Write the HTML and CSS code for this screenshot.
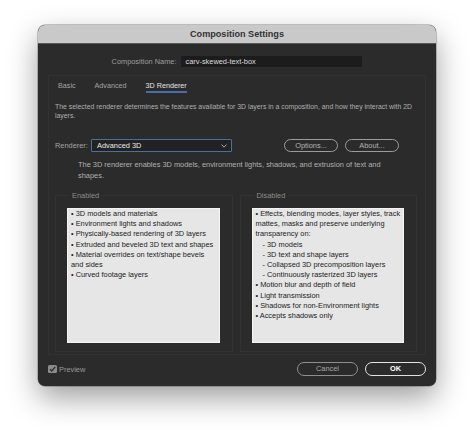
FILE: index.html
```html
<!DOCTYPE html>
<html>
<head>
<meta charset="utf-8">
<link rel="stylesheet" href="styles.css">
</head>
<body>
<div class="stage">
  <div class="window">
    <div class="titlebar">Composition Settings</div>
    <div class="content">
      <div class="name-row">
        <span class="name-label">Composition Name:</span>
        <div class="name-input">carv-skewed-text-box</div>
      </div>
      <div class="panel">
        <div class="tabs">
          <span class="tab">Basic</span>
          <span class="tab">Advanced</span>
          <span class="tab active">3D Renderer</span>
        </div>
        <p class="desc">The selected renderer determines the features available for 3D layers in a composition, and how they interact with 2D<br>layers.</p>
        <div class="renderer-row">
          <span class="renderer-label">Renderer:</span>
          <div class="select">
            <span>Advanced 3D</span>
            <svg class="chev" width="6" height="4" viewBox="0 0 6 4"><path d="M0.6 0.6 L3 3.2 L5.4 0.6" fill="none" stroke="#b8b8b8" stroke-width="0.9"/></svg>
          </div>
          <span class="btn options">Options...</span>
          <span class="btn">About...</span>
        </div>
        <p class="desc2">The 3D renderer enables 3D models, environment lights, shadows, and extrusion of text and<br>shapes.</p>
        <div class="groups">
          <fieldset class="group">
            <legend>Enabled</legend>
            <div class="list">
              <div>• 3D models and materials</div>
              <div>• Environment lights and shadows</div>
              <div>• Physically-based rendering of 3D layers</div>
              <div>• Extruded and beveled 3D text and shapes</div>
              <div>• Material overrides on text/shape bevels<br>and sides</div>
              <div>• Curved footage layers</div>
            </div>
          </fieldset>
          <fieldset class="group">
            <legend>Disabled</legend>
            <div class="list">
              <div>• Effects, blending modes, layer styles, track<br>mattes, masks and preserve underlying<br>transparency on:</div>
              <div class="sub">- 3D models</div>
              <div class="sub">- 3D text and shape layers</div>
              <div class="sub">- Collapsed 3D precomposition layers</div>
              <div class="sub">- Continuously rasterized 3D layers</div>
              <div>• Motion blur and depth of field</div>
              <div>• Light transmission</div>
              <div>• Shadows for non-Environment lights</div>
              <div>• Accepts shadows only</div>
            </div>
          </fieldset>
        </div>
      </div>
      <div class="bottom-row">
        <div class="preview">
          <span class="check">
            <svg width="9" height="8" viewBox="0 0 9 8"><path d="M2 4.2 L3.8 6 L7.2 1.8" fill="none" stroke="#2b2b2b" stroke-width="1.3"/></svg>
          </span>
          <span class="preview-label">Preview</span>
        </div>
        <div class="actions">
          <span class="btn wide">Cancel</span>
          <span class="btn wide ok">OK</span>
        </div>
      </div>
    </div>
  </div>
</div>
</body>
</html>
```
FILE: styles.css
```css
html, body {
  margin: 0;
  padding: 0;
  background: #ffffff;
}
body {
  font-family: "Liberation Sans", Arial, sans-serif;
  width: 474px;
  height: 437px;
  overflow: hidden;
}
.stage {
  padding: 25px 0 0 38px;
}
.window {
  width: 398px;
  background: #2b2b2b;
  border-radius: 7px;
  overflow: hidden;
  box-shadow: 0 12px 30px rgba(0, 0, 0, 0.38), 0 0 0 0.5px rgba(0, 0, 0, 0.4);
}
.titlebar {
  height: 18px;
  line-height: 18px;
  background: #c9c9c9;
  border-bottom: 1px solid #5a5a5a;
  text-align: center;
  font-weight: bold;
  font-size: 9.1px;
  color: #323232;
}
.content {
  padding: 12px 10px 10px 10px;
}
.name-row {
  display: flex;
  justify-content: center;
  align-items: center;
  gap: 5px;
  height: 11px;
}
.name-label {
  font-size: 7.4px;
  color: #9e9e9e;
}
.name-input {
  width: 177px;
  height: 11px;
  line-height: 11px;
  padding-left: 4px;
  background: #1c1c1c;
  font-size: 7.4px;
  color: #dcdcdc;
}
.panel {
  margin-top: 8px;
  border: 1px solid #323232;
  padding: 0 8px 2px 6px;
}
.tabs {
  display: flex;
  gap: 19px;
  margin-left: 3px;
  padding-top: 4px;
}
.tab {
  font-size: 7.2px;
  line-height: 11px;
  height: 11px;
  border-bottom: 2px solid transparent;
  color: #a3a3a3;
}
.tab.active {
  color: #e6e6e6;
  border-bottom-color: #4a6da6;
}
.desc {
  margin: 9px 0 0 0;
  font-size: 6.88px;
  line-height: 9px;
  color: #b0b0b0;
}
.renderer-row {
  display: flex;
  align-items: center;
  margin-top: 19px;
  height: 13px;
}
.renderer-label {
  font-size: 7.4px;
  color: #a5a5a5;
  width: 36px;
}
.select {
  box-sizing: border-box;
  width: 141px;
  height: 13px;
  border: 1px solid #4d6f9f;
  border-radius: 1px;
  background: #222222;
  display: flex;
  align-items: center;
  justify-content: space-between;
  padding: 0 4px 0 5px;
  font-size: 7.4px;
  color: #ececec;
}
.chev {
  display: block;
}
.btn {
  box-sizing: border-box;
  width: 54px;
  height: 13px;
  line-height: 11px;
  border: 1px solid #9c9c9c;
  border-radius: 7px;
  text-align: center;
  font-size: 7.4px;
  color: #b3b3b3;
  margin-left: 7px;
}
.btn.options {
  margin-left: 52px;
}
.desc2 {
  margin: 7px 0 0 23px;
  font-size: 7.42px;
  line-height: 11px;
  color: #b0b0b0;
}
.groups {
  display: grid;
  grid-template-columns: 1fr 1fr;
  gap: 7px;
  margin-top: 10px;
}
.group {
  margin: 0;
  min-width: 0;
  border: 1px solid #333333;
  padding: 8px 12px 8px 11px;
}
.group legend {
  font-size: 7.4px;
  line-height: 9px;
  color: #8e8e8e;
  padding: 0 3px;
  margin-left: 2px;
}
.list {
  box-sizing: border-box;
  height: 135px;
  background: #e6e6e6;
  border: 1px solid #f4f4f4;
  padding: 0 3px 0 3px;
  font-size: 7.4px;
  line-height: 10.2px;
  color: #222222;
  white-space: nowrap;
}
.list .sub {
  padding-left: 7px;
}
.bottom-row {
  display: flex;
  justify-content: space-between;
  align-items: center;
  margin-top: 7px;
  height: 14px;
}
.preview {
  display: flex;
  align-items: center;
  gap: 2px;
}
.check {
  width: 9px;
  height: 8px;
  background: #8b8b8b;
  border-radius: 1.5px;
  display: flex;
}
.preview-label {
  font-size: 7.4px;
  color: #9a9a9a;
}
.actions {
  display: flex;
  gap: 7px;
}
.btn.wide {
  width: 61px;
  height: 14px;
  line-height: 12px;
  margin-left: 0;
  color: #a8a8a8;
  border-color: #8f8f8f;
}
.btn.ok {
  border-color: #e2e2e2;
  color: #ffffff;
  font-weight: bold;
}
```
